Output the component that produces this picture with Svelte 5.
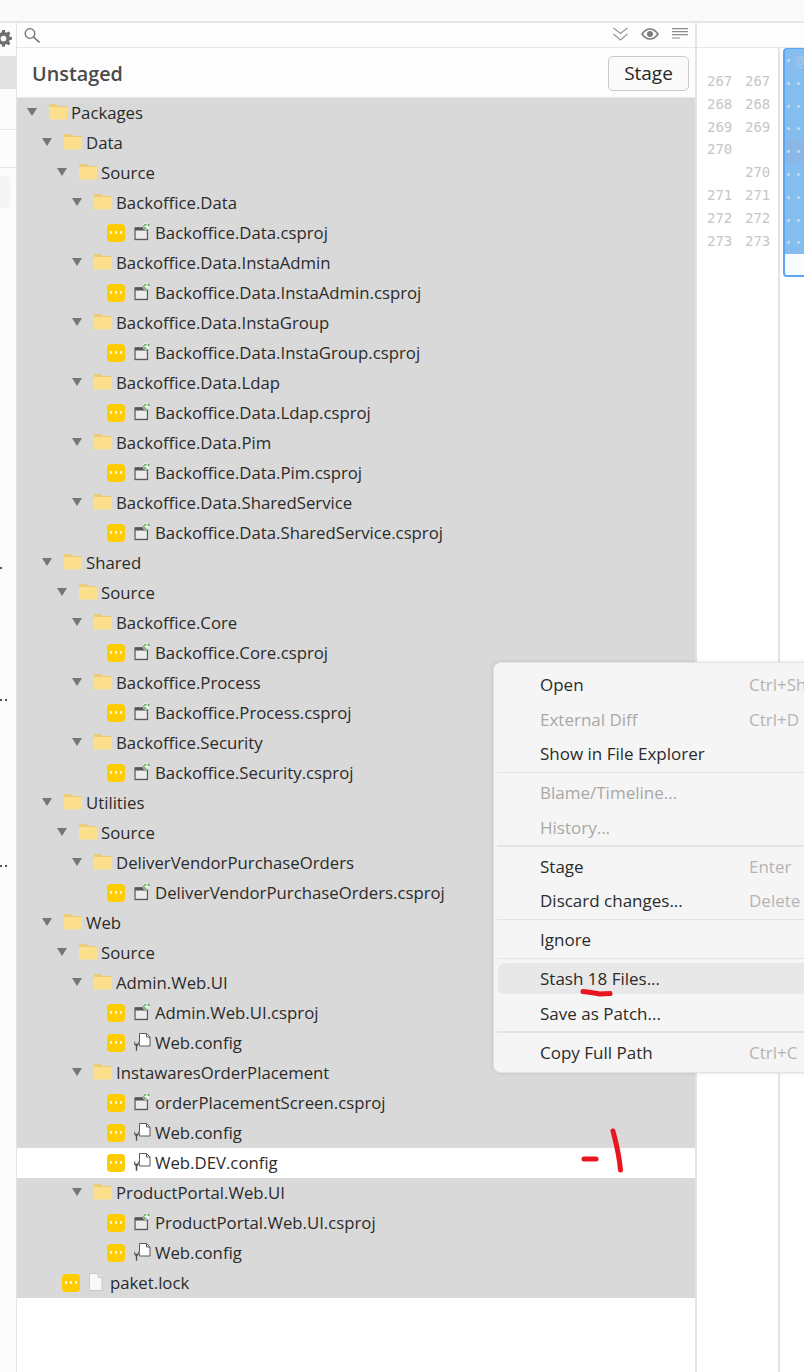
<script>
  const folder = (d, n) => ({ t: 'folder', d, n });
  const proj = (d, n) => ({ t: 'file', d, n, i: 'proj' });
  const cfg = (d, n) => ({ t: 'file', d, n, i: 'cfg' });
  const rows = [
    folder(0, 'Packages'), folder(1, 'Data'), folder(2, 'Source'),
    folder(3, 'Backoffice.Data'), proj(4, 'Backoffice.Data.csproj'),
    folder(3, 'Backoffice.Data.InstaAdmin'), proj(4, 'Backoffice.Data.InstaAdmin.csproj'),
    folder(3, 'Backoffice.Data.InstaGroup'), proj(4, 'Backoffice.Data.InstaGroup.csproj'),
    folder(3, 'Backoffice.Data.Ldap'), proj(4, 'Backoffice.Data.Ldap.csproj'),
    folder(3, 'Backoffice.Data.Pim'), proj(4, 'Backoffice.Data.Pim.csproj'),
    folder(3, 'Backoffice.Data.SharedService'), proj(4, 'Backoffice.Data.SharedService.csproj'),
    folder(1, 'Shared'), folder(2, 'Source'),
    folder(3, 'Backoffice.Core'), proj(4, 'Backoffice.Core.csproj'),
    folder(3, 'Backoffice.Process'), proj(4, 'Backoffice.Process.csproj'),
    folder(3, 'Backoffice.Security'), proj(4, 'Backoffice.Security.csproj'),
    folder(1, 'Utilities'), folder(2, 'Source'),
    folder(3, 'DeliverVendorPurchaseOrders'), proj(4, 'DeliverVendorPurchaseOrders.csproj'),
    folder(1, 'Web'), folder(2, 'Source'),
    folder(3, 'Admin.Web.UI'), proj(4, 'Admin.Web.UI.csproj'), cfg(4, 'Web.config'),
    folder(3, 'InstawaresOrderPlacement'), proj(4, 'orderPlacementScreen.csproj'), cfg(4, 'Web.config'),
    { ...cfg(4, 'Web.DEV.config'), plain: true },
    folder(3, 'ProductPortal.Web.UI'), proj(4, 'ProductPortal.Web.UI.csproj'), cfg(4, 'Web.config'),
    { t: 'file', d: 1, n: 'paket.lock', i: 'doc' }
  ];
  const lines = [['267','267'],['268','268'],['269','269'],['270',''],['','270'],['271','271'],['272','272'],['273','273']];
  const menu = [
    [{ l: 'Open', s: 'Ctrl+Shift+O' }, { l: 'External Diff', s: 'Ctrl+D', off: true }, { l: 'Show in File Explorer' }],
    [{ l: 'Blame/Timeline...', off: true }, { l: 'History...', off: true }],
    [{ l: 'Stage', s: 'Enter' }, { l: 'Discard changes...', s: 'Delete' }],
    [{ l: 'Ignore' }],
    [{ l: 'Stash 18 Files...', hover: true }, { l: 'Save as Patch...' }],
    [{ l: 'Copy Full Path', s: 'Ctrl+C' }]
  ];
</script>

<div class="screen">
  <div class="topbar"></div>
  <div class="main">
    <aside class="side">
      <div class="side-head">
        <svg class="gear" width="19" height="19" viewBox="0 0 20 20">
          <path fill="#6f6f6f" fill-rule="evenodd" d="M8.600 1h2.800l.4 2.400 1.500.6 2-1.400 2 2-1.400 2 .6 1.500 2.400.4v2.800l-2.400.4-.6 1.500 1.400 2-2 2-2-1.400-1.500.6-.4 2.400H8.600l-.4-2.400-1.500-.6-2 1.400-2-2 1.400-2-.6-1.500L1 11.400V8.600l2.400-.4.6-1.500-1.400-2 2-2 2 1.400 1.500-.6zM10 7a3 3 0 1 0 0 6 3 3 0 0 0 0-6z"/>
        </svg>
      </div>
      <div class="side-sel"></div>
      <div class="side-a"></div>
      <div class="side-b"></div>
      <div class="side-box"></div>
      <span class="tick t1"></span>
      <span class="tick t2"></span><span class="tick t2b"></span>
      <span class="tick t3"></span><span class="tick t3b"></span>
    </aside>

    <section class="panel">
      <div class="searchbar">
        <svg class="search" width="17" height="17" viewBox="0 0 17 17" fill="none" stroke="#6e6e6e">
          <circle cx="6" cy="6.500" r="4.800" stroke-width="1.300"/>
          <path d="M9.500 10l6 5.500" stroke-width="1.600"/>
        </svg>
        <svg width="15" height="14" viewBox="0 0 15 14" fill="none" stroke="#999" stroke-width="1.300">
          <path d="M.5 1l7 5.500 7-5.500M.5 7l7 6 7-6"/>
        </svg>
        <svg width="18" height="12" viewBox="0 0 18 12">
          <path fill="none" stroke="#7c7c7c" stroke-width="1.600" d="M1 6C3.500 2.500 6 1 9 1s5.500 1.500 8 5c-2.500 3.500-5 5-8 5S3.500 9.500 1 6z"/>
          <circle cx="9" cy="6" r="3" fill="#7c7c7c"/>
        </svg>
        <svg width="16" height="11" viewBox="0 0 16 11" stroke="#8c8c8c" stroke-width="1.200">
          <path d="M0 .6h16M0 3.600h16M0 6.600h16M0 10h8"/>
        </svg>
      </div>
      <header class="head">
        <h2>Unstaged</h2>
        <div class="stage">Stage</div>
      </header>
      <div class="tree">
        {#each rows as r}
          <div class="row" class:plain={r.plain} style="padding-left:{r.t === 'folder' ? 10 + r.d * 15 : 30 + r.d * 15}px">
            {#if r.t === 'folder'}
              <svg class="tri" width="10" height="8" viewBox="0 0 10 8"><path d="M0 0h10L5 8z" fill="#767676"/></svg>
              <svg class="folder" width="18" height="16" viewBox="0 0 18 16">
                <path d="M0 0h7l2 2h9v3H0z" fill="#eecb78"/>
                <path d="M0 3h18v12.500H0z" fill="#fcdf8c"/>
              </svg>
            {:else}
              <span class="badge"><i></i><i></i><i></i></span>
              <span class="ficon">
                {#if r.i === 'proj'}
                  <svg width="18" height="18" viewBox="0 0 18 18">
                    <path d="M1 4h14.500v13.500H1z" fill="#f7f7f7"/>
                    <path d="M2 5h12.500v11.500H2z" fill="#ebebeb" stroke="#5a5a5a" stroke-width="1.300"/>
                    <path d="M2 4.500h12.500v3H2z" fill="#555"/>
                    <circle cx="13" cy="3.500" r="3.200" fill="#f2f6f0"/>
                    <path d="M13.500 2a1.800 1.800 0 1 0 0 3" fill="none" stroke="#4ea04e" stroke-width="1.100"/>
                    <path d="M15.500 .8v2.400M14.300 2h2.400" stroke="#4ea04e" stroke-width=".9"/>
                  </svg>
                {:else if r.i === 'cfg'}
                  <svg width="18" height="18" viewBox="0 0 18 18">
                    <path d="M6.500 13V.5h7l3.500 3.500v9z" fill="#fff" stroke="#5a5a5a" stroke-width="1"/>
                    <path d="M13.500.5V4H17" fill="none" stroke="#5a5a5a" stroke-width="1"/>
                    <path d="M1 8.500h1.500v2h2v-2H6v3l-1.500 1.500v5h-2v-5L1 11.500z" fill="#4a4a4a" stroke="#f2f2f2" stroke-width=".5"/>
                  </svg>
                {:else}
                  <svg width="14" height="18" viewBox="0 0 14 18" class="doc">
                    <path d="M.5.500h8.500l4 4v13H.500z" fill="#f8f8f8" stroke="#c9c9c9"/>
                    <path d="M9 .5v4h4" fill="#ececec" stroke="#c9c9c9"/>
                  </svg>
                {/if}
              </span>
            {/if}
            <span class="name">{r.n}</span>
          </div>
        {/each}
      </div>
    </section>

    <section class="diff">
      <div class="diff-head"></div>
      <div class="diff-body">
        <div class="gutter">
          {#each lines as l}
            <div class="ln"><span>{l[0]}</span><span>{l[1]}</span></div>
          {/each}
        </div>
        <div class="code">
          <div class="hunk">
            <div class="hl first"><b></b><em>@</em></div>
            {#each lines as l, i}
              <div class="hl" class:dark={i === 3}><b></b><b></b></div>
            {/each}
            <div class="hunk-end"></div>
          </div>
        </div>
      </div>
    </section>
  </div>

  <div class="menu">
    {#each menu as group, gi}
      {#if gi > 0}<div class="sep"></div>{/if}
      {#each group as m}
        <div class="mi" class:off={m.off} class:hover={m.hover}>
          <span class="ml">{m.l}</span>
          {#if m.s}<span class="ms">{m.s}</span>{/if}
        </div>
      {/each}
    {/each}
  </div>

  <svg class="ink" width="804" height="1372" viewBox="0 0 804 1372" fill="none" stroke="#e8161e" stroke-linecap="round">
    <path d="M583 991.500c6 .5 12 1.500 17 2.500l10-.5" stroke-width="5"/>
    <path d="M584 1159h12" stroke-width="5"/>
    <path d="M613 1131c2 8 6 22 7.500 39" stroke-width="5"/>
  </svg>
</div>

<style>
  :global(body) { margin: 0; background: #fff; }
  .screen {
    position: relative; width: 804px; height: 1372px; overflow: hidden;
    font-family: "Open Sans", "Noto Sans", sans-serif; color: #262626;
    display: flex; flex-direction: column; background: #fff;
  }
  .topbar { height: 21px; background: #fafafa; border-bottom: 2px solid #e6e6e6; flex: none; }
  .main { flex: 1; display: flex; min-height: 0; }

  .side { position: relative; width: 16px; flex: none; background: #fcfcfc; border-right: 1px solid #e4e4e4; }
  .side-head { height: 33px; position: relative; overflow: hidden; }
  .gear { position: absolute; left: -6px; top: 6px; }
  .side-sel { height: 33px; background: #e2e2e2; }
  .side-a { height: 40px; border-bottom: 1px solid #e6e6e6; }
  .side-b { height: 37px; border-bottom: 1px solid #e6e6e6; }
  .side-box { height: 32px; width: 10px; margin-top: 8px; background: #f5f5f5; border-radius: 0 5px 5px 0; }
  .tick { position: absolute; height: 2px; width: 2px; background: #555; }
  .t1 { left: 0; top: 544px; }
  .t2 { left: 0; top: 676px; }
  .t2b { left: 5px; top: 676px; }
  .t3 { left: 0; top: 842px; }
  .t3b { left: 5px; top: 842px; }

  .panel { width: 678px; flex: none; border-right: 2px solid #e4e4e4; display: flex; flex-direction: column; background: #fff; }
  .searchbar {
    flex: none; border-bottom: 1px solid #e6e6e6; background: #fdfdfd;
    display: flex; align-items: center; gap: 13px; padding: 0 7px 3px 7px; justify-content: flex-end; height: 21px;
  }
  .search { margin-right: auto; margin-top: 3px; }
  .head {
    flex: none; background: #fdfdfd; border-bottom: 1px solid #e6e6e6; box-sizing: border-box;
    display: flex; align-items: center; justify-content: space-between; padding: 2px 6px 0 15px; height: 50px;
  }
  .head h2 { margin: 0; font-size: 19.800px; font-weight: 600; color: #4a4a4a; }
  .stage {
    width: 81px; height: 35px; box-sizing: border-box; border: 1px solid #c9c9c9; border-radius: 5px; margin-bottom: 1px;
    background: #fafafa; display: flex; align-items: center; justify-content: center; font-size: 19px; padding-bottom: 1px;
  }

  .tree { background: #d9d9d9; }
  .row { height: 30px; display: flex; align-items: center; box-sizing: border-box; white-space: nowrap; }
  .row.plain { background: #fff; }
  .tri { width: 10px; margin-right: 12px; margin-top: -3px; flex: none; }
  .folder { margin-right: 4px; margin-top: -2px; flex: none; }
  .name { font-size: 16.750px; color: #2b2b2b; padding-bottom: 1px; }
  .badge {
    width: 18px; height: 18px; border-radius: 4px; background: #ffcc00; margin-right: 8px; flex: none;
    display: flex; align-items: center; justify-content: center; gap: 2.500px; margin-top: -1px;
  }
  .badge i { width: 2.500px; height: 2.500px; background: #fff; border-radius: 50%; }
  .ficon { width: 18px; margin-right: 4px; flex: none; display: flex; height: 18px; margin-top: -2px; }
  .doc { margin-left: 1px; }

  .diff { flex: 1; display: flex; flex-direction: column; min-width: 0; background: #fff; }
  .diff-head { height: 24px; flex: none; background: #fdfdfd; border-bottom: 1px solid #e6e6e6; }
  .diff-body { flex: 1; display: flex; min-height: 0; }
  .gutter {
    width: 83px; flex: none; box-sizing: border-box; border-right: 2px solid #e4e4e4; padding-top: 22px;
    font-family: "DejaVu Sans Mono", monospace; font-size: 14px; color: #c6c6c6;
  }
  .ln { height: 22.800px; display: flex; gap: 10px; padding-left: 10px; line-height: 22.800px; }
  .ln span { width: 28px; }
  .code { flex: 1; padding-left: 3px; min-width: 0; }
  .hunk {
    height: 229px; box-sizing: border-box; border: 2px solid #5ba6f2; border-right: 0;
    border-radius: 4px 0 0 4px; background: #85bdee; overflow: hidden; display: flex; flex-direction: column;
    border-top-width: 1px;
  }
  .hl { height: 22.800px; flex: none; display: flex; align-items: center; gap: 7px; padding-left: 2px; }
  .hl.first { height: 23px; }
  .hl.dark { background: #8ab7e6; }
  .hl b { width: 3px; height: 3px; border-radius: 50%; background: #c2dcf4; flex: none; }
  .hl em { font-style: normal; font-family: "DejaVu Sans Mono", monospace; font-size: 14px; color: #a9c9e6; margin-left: -2px; }
  .hunk-end { flex: 1; background: #f8fbff; }

  .menu {
    position: absolute; left: 493px; top: 662px; width: 400px; height: 411px; box-sizing: border-box;
    background: #f5f5f5; border: 1px solid #e2e2e2; border-right: 0; border-radius: 8px 0 0 8px; padding-top: 4.500px;
    box-shadow: 0 0 4px rgba(0,0,0,.12);
  }
  .mi { height: 34.500px; box-sizing: border-box; display: flex; align-items: center; position: relative; padding-left: 42px; font-size: 17px; color: #2b2b2b; margin-left: 4px; }
  .mi.off .ml { color: #a8a8a8; }
  .mi.hover {
    background: #e8e8e8; border-radius: 7px; background-clip: padding-box;
    border-top: 1px solid transparent; border-bottom: 2.500px solid transparent;
  }
  .ms { position: absolute; left: 251px; color: #b4b4b4; white-space: nowrap; }
  .sep { height: 1.500px; background: #e4e4e4; margin: .5px 0 2.500px 3px; }

  .ink { position: absolute; left: 0; top: 0; pointer-events: none; }
</style>
